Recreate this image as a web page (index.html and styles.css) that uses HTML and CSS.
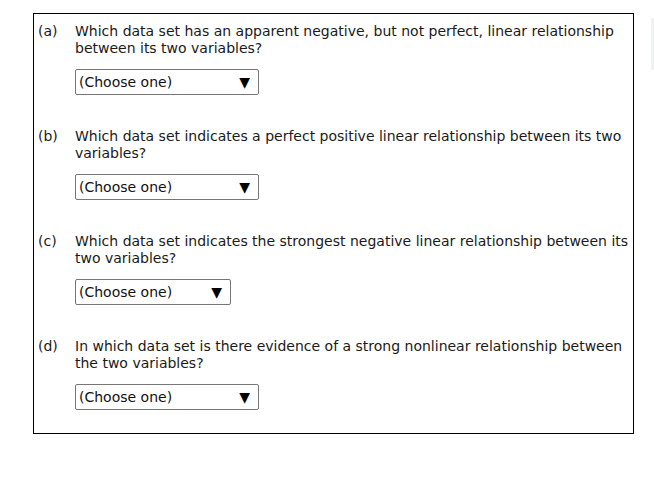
FILE: index.html
```html
<!DOCTYPE html>
<html>
<head>
<meta charset="utf-8">
<link rel="stylesheet" href="styles.css">
</head>
<body>
<div class="panel">
  <div class="question">
    <div class="label">(a)</div>
    <div class="body">
      <div class="text">Which data set has an apparent negative, but not perfect, linear relationship between its two variables?</div>
      <div class="select wide"><span>(Choose one)</span><span class="arrow">▼</span></div>
    </div>
  </div>
  <div class="question">
    <div class="label">(b)</div>
    <div class="body">
      <div class="text">Which data set indicates a perfect positive linear relationship between its two variables?</div>
      <div class="select wide"><span>(Choose one)</span><span class="arrow">▼</span></div>
    </div>
  </div>
  <div class="question">
    <div class="label">(c)</div>
    <div class="body">
      <div class="text">Which data set indicates the strongest negative linear relationship between its two variables?</div>
      <div class="select narrow"><span>(Choose one)</span><span class="arrow">▼</span></div>
    </div>
  </div>
  <div class="question">
    <div class="label">(d)</div>
    <div class="body">
      <div class="text">In which data set is there evidence of a strong nonlinear relationship between the two variables?</div>
      <div class="select wide"><span>(Choose one)</span><span class="arrow">▼</span></div>
    </div>
  </div>
</div>
<div class="edge-tab"></div>
</body>
</html>
```
FILE: styles.css
```css
html, body {
  margin: 0;
  padding: 0;
  background: #fff;
}
body {
  font-family: "DejaVu Sans", Verdana, sans-serif;
  font-size: 14px;
  color: #1a1a1a;
  padding: 13px 0 0 33px;
}
.panel {
  border: 1px solid #000;
  padding: 9px 2px 0 4px;
  box-sizing: border-box;
  width: 601px;
  height: 421px;
  display: flex;
  flex-direction: column;
  gap: 33px;
}
.question {
  display: flex;
}
.label {
  width: 37px;
  line-height: 17px;
}
.body {
  flex: 1;
  display: flex;
  flex-direction: column;
  align-items: flex-start;
}
.text {
  line-height: 17px;
}
.select {
  margin-top: 12px;
  height: 26px;
  box-sizing: border-box;
  border: 1px solid #767676;
  border-radius: 2px;
  display: flex;
  align-items: center;
  justify-content: space-between;
  padding: 0 8px 0 3px;
  font-size: 14px;
  color: #111;
}
.select.wide { width: 184px; }
.select.narrow { width: 156px; }
.arrow {
  font-size: 14px;
  color: #000;
}
.edge-tab {
  position: absolute;
  left: 651px;
  top: 18px;
  width: 3px;
  height: 52px;
  background: #f0f2f2;
}
```
